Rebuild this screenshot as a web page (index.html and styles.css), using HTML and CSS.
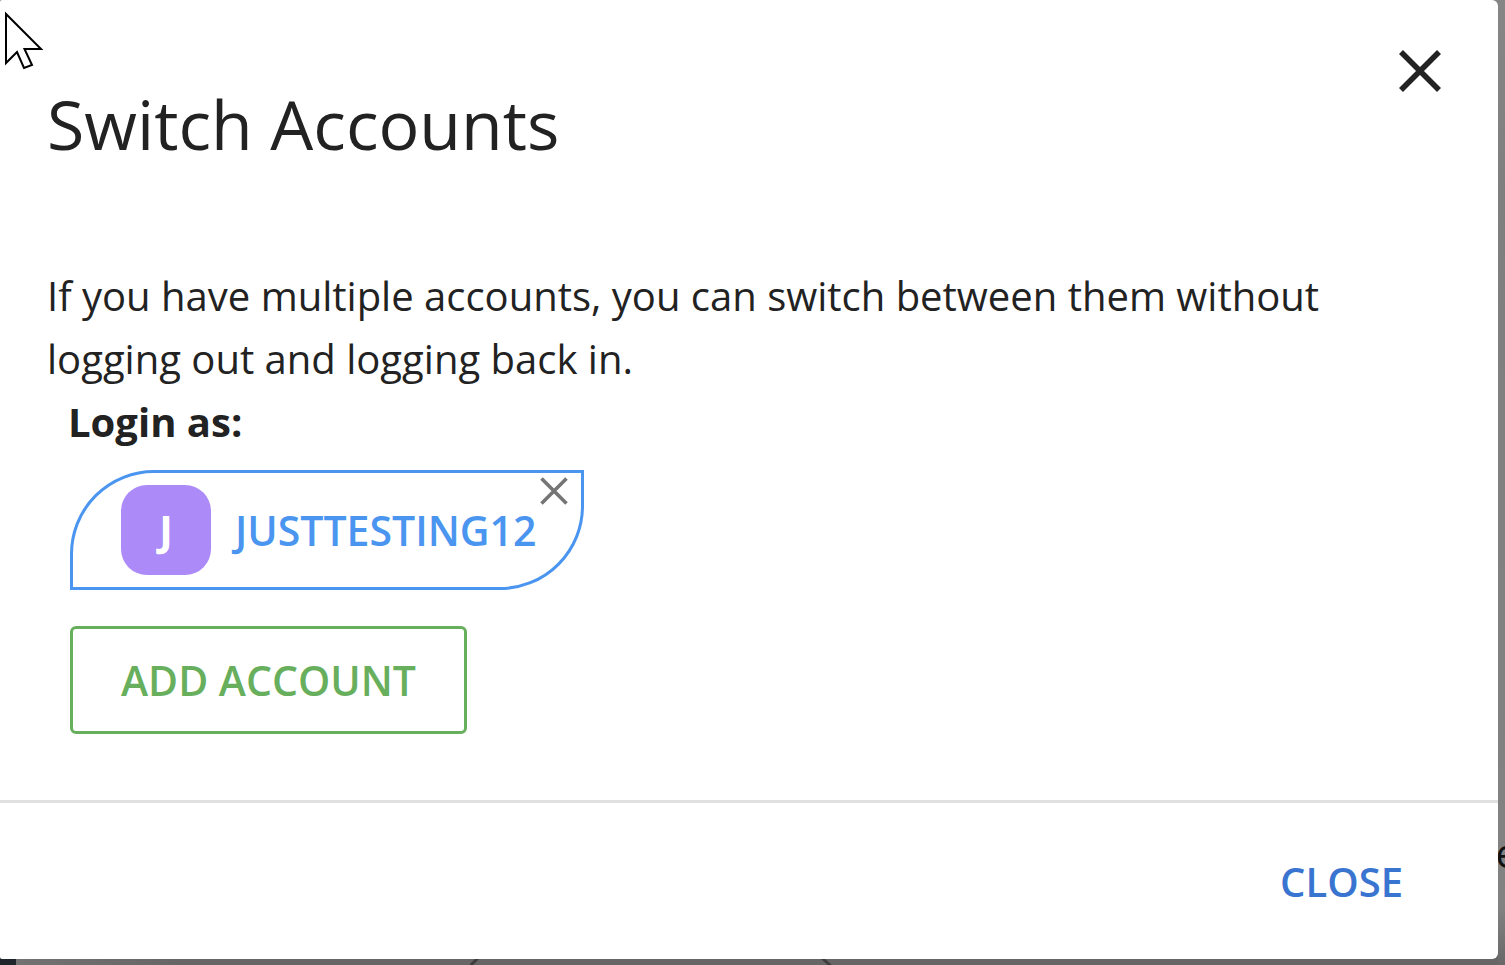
FILE: index.html
```html
<!DOCTYPE html>
<html lang="en">
<head>
<meta charset="utf-8">
<title>Switch Accounts</title>
<link rel="stylesheet" href="styles.css">
</head>
<body>
<div class="backdrop">
  <span class="page-nav"></span>
  <span class="page-text" aria-hidden="true">e</span>
  <svg class="page-edge" viewBox="0 0 362 6" aria-hidden="true"><path d="M0 7L8 -1M352 -1L361 7" fill="none" stroke="#3e3e3e" stroke-width="3"/></svg>
  <section class="dialog" role="dialog" aria-labelledby="dialog-title">
    <header class="dialog-header">
      <h1 class="dialog-title" id="dialog-title">Switch Accounts</h1>
      <button class="dismiss" type="button" aria-label="Dismiss">
        <svg class="dismiss-icon" viewBox="0 0 42 42"><path d="M2 2L40 40M40 2L2 40" stroke="#222" stroke-width="5.6"/></svg>
      </button>
    </header>
    <div class="dialog-body">
      <p class="intro">If you have multiple accounts, you can switch between them without logging out and logging back in.</p>
      <h2 class="login-label">Login as:</h2>
      <div class="account">
        <button class="account-button" type="button">
          <span class="avatar">J</span>
          <span class="account-name">JUSTTESTING12</span>
        </button>
        <button class="remove" type="button" aria-label="Remove account">
          <svg class="remove-icon" viewBox="0 0 28 28"><path d="M1.5 1.5L26.5 26.5M26.5 1.5L1.5 26.5" stroke="#757575" stroke-width="3.6"/></svg>
        </button>
      </div>
      <button class="add-account" type="button">ADD ACCOUNT</button>
    </div>
    <footer class="dialog-footer">
      <button class="close" type="button">CLOSE</button>
    </footer>
  </section>
  <svg class="cursor" viewBox="0 0 40 60" aria-hidden="true"><path d="M2 3V52L13 41L20 57L28 54L20.500 38H37Z" fill="#fff" stroke="#000" stroke-width="2"/></svg>
</div>
</body>
</html>
```
FILE: styles.css
```css
* {
  box-sizing: border-box;
}

body {
  margin: 0;
  color: #222;
  font-family: "Segoe UI", "Open Sans", "Noto Sans", sans-serif;
  font-size: 40px;
  line-height: 63px;
}

button {
  padding: 0;
  border: 0;
  background: none;
  color: inherit;
  font: inherit;
  cursor: pointer;
}

svg {
  display: block;
}

.backdrop {
  position: relative;
  min-height: 100vh;
  padding: 0 7px 6px 0;
  overflow: hidden;
  background: linear-gradient(to bottom, #868686, #7f7f7f 20%, #828282 94%, #686868);
}

.backdrop::before {
  content: "";
  position: absolute;
  right: 7px;
  bottom: 0;
  left: 0;
  height: 10px;
  background: linear-gradient(to right, #737373, #666 12%);
}

.page-nav {
  position: absolute;
  bottom: 0;
  left: 0;
  width: 16px;
  height: 10px;
  background: #1f252b;
}

.page-text {
  position: absolute;
  right: -13px;
  bottom: 81px;
  color: #111;
}

.page-edge {
  position: absolute;
  bottom: 0;
  left: 470px;
  width: 362px;
  height: 6px;
}

.dialog {
  position: relative;
  border-radius: 2px 6px 6px 2px;
  background: #fff;
}

.dialog-header {
  display: flex;
  justify-content: space-between;
  align-items: flex-start;
  padding: 50px 57px 64px 47px;
}

.dialog-title {
  margin: 22px 0 0;
  font-size: 68px;
  font-weight: 400;
  line-height: 104px;
}

.dismiss-icon {
  width: 42px;
  height: 42px;
}

.dialog-body {
  display: flex;
  flex-direction: column;
  align-items: flex-start;
  padding: 24px 47px 66px;
}

.intro {
  max-width: 1320px;
  margin: 0;
}

.login-label {
  margin: 0 0 17px 21px;
  font-size: 40px;
  font-weight: 700;
}

.account {
  position: relative;
  margin: 0 0 36px 23px;
}

.account-button {
  display: flex;
  align-items: center;
  gap: 24px;
  height: 120px;
  padding: 0 45px 0 48px;
  border: 3px solid #4a95ef;
  border-radius: 84px 0;
  color: #4a95ef;
  font-size: 41px;
  font-weight: 600;
}

.avatar {
  display: grid;
  place-items: center;
  width: 90px;
  height: 90px;
  border-radius: 26px;
  background: #ac8bf8;
  color: #fff;
  font-weight: 700;
}

.remove {
  position: absolute;
  top: 7px;
  right: 16px;
}

.remove-icon {
  width: 28px;
  height: 28px;
}

.add-account {
  height: 108px;
  margin-left: 23px;
  padding: 0 48px;
  border: 3px solid #68af5d;
  border-radius: 6px;
  color: #68af5d;
  font-size: 41px;
  font-weight: 600;
}

.dialog-footer {
  display: flex;
  justify-content: flex-end;
  padding: 47px 95px 46px;
  border-top: 3px solid #e0e0e0;
}

.close {
  color: #3975d0;
  font-weight: 600;
}

.cursor {
  position: absolute;
  top: 11px;
  left: 4px;
  width: 40px;
  height: 60px;
}
```
